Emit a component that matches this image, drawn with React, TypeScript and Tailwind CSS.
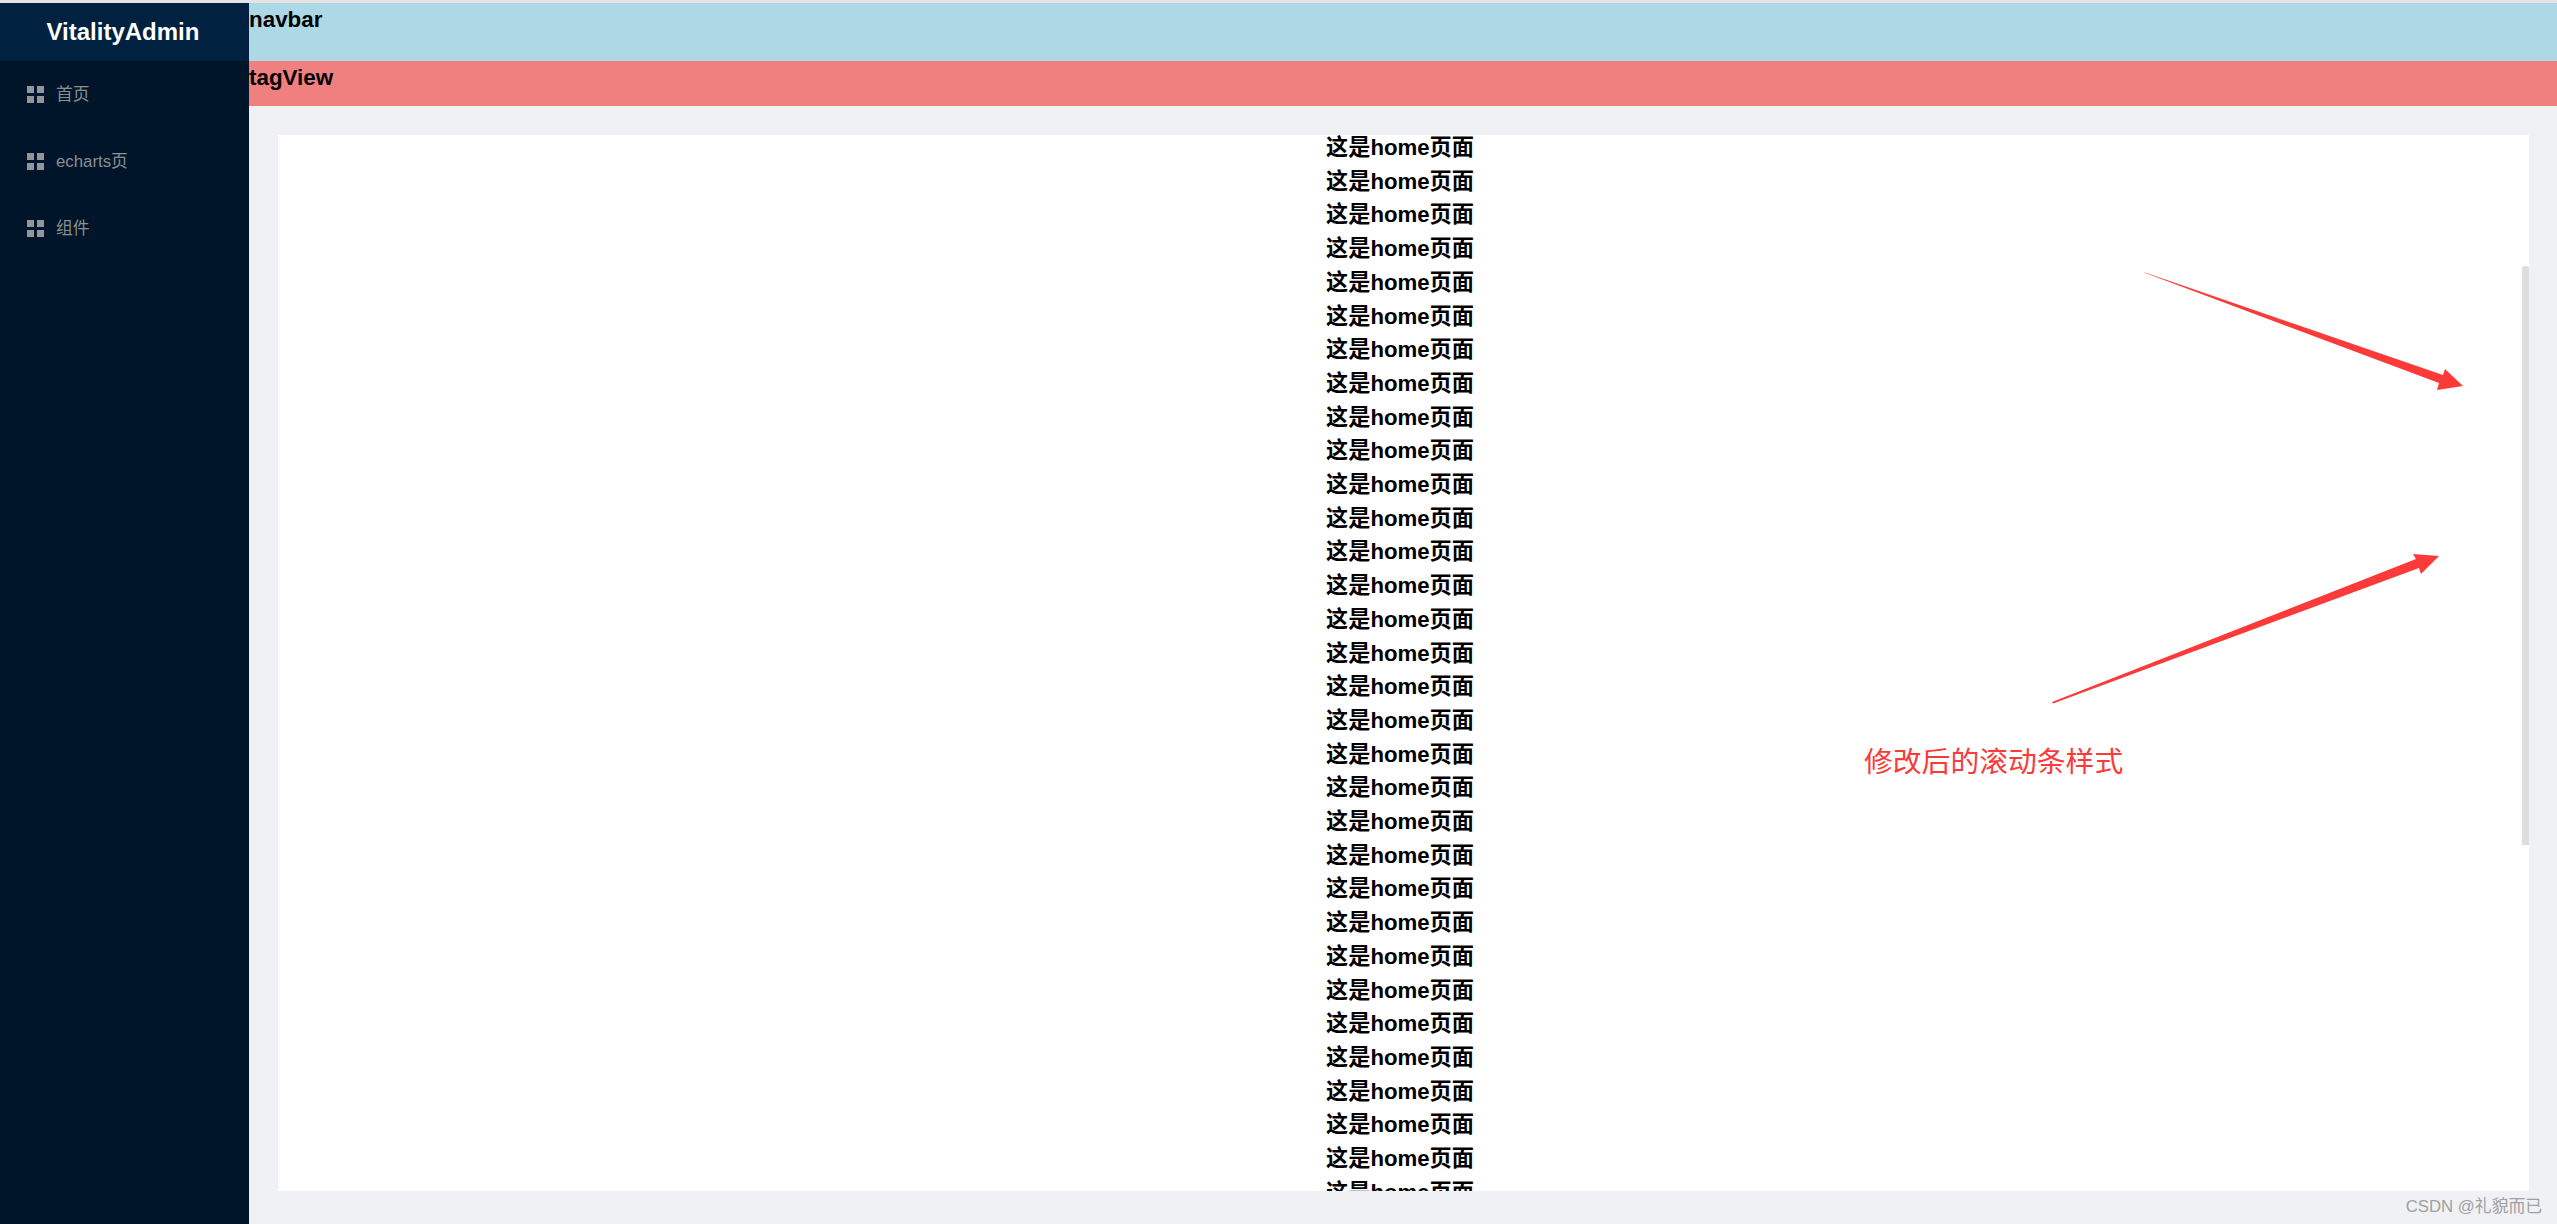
const rows = Array.from({ length: 33 }, (_, i) => i);

const menu = ["首页", "echarts页", "组件"];

function MenuIcon() {
  return (
    <svg width="17" height="17" viewBox="0 0 17 17" className="shrink-0">
      <rect x="0" y="0" width="7" height="7" fill="#94969a" />
      <rect x="10" y="0" width="7" height="7" fill="#94969a" />
      <rect x="0" y="10" width="7" height="7" fill="#94969a" />
      <rect x="10" y="10" width="7" height="7" fill="#94969a" />
    </svg>
  );
}

function Arrows() {
  return (
    <svg
      className="absolute left-0 top-0 pointer-events-none"
      width="2557"
      height="1224"
      viewBox="0 0 2557 1224"
    >
      <polygon
        points="2144,272.5 2145,272.5 2443,375 2445,369 2463,386 2437,390 2439,383"
        fill="#fc3a3a"
      />
      <polygon
        points="2052,702 2053,703.5 2419,568 2421,574 2439,556 2413,554 2416,559"
        fill="#fc3a3a"
      />
    </svg>
  );
}

export default function App() {
  return (
    <div className="relative h-screen w-full overflow-hidden bg-[#f0f1f5] font-['Liberation_Sans','Noto_Sans_CJK_SC',sans-serif]">
      <div className="h-[3px] bg-[#e4e4e4]"></div>
      <div className="flex h-[1221px]">
        <aside className="w-[249px] shrink-0 bg-[#001529]">
          <div className="h-[58px] pr-[3px] bg-[#002140] flex items-center justify-center text-white font-bold text-[24px]">
            VitalityAdmin
          </div>
          <ul>
            {menu.map((m) => (
              <li
                key={m}
                className="flex items-center h-[67px] pl-[27px] gap-[12px] text-[16.8px] text-[#8b8e92]"
              >
                <MenuIcon />
                {m}
              </li>
            ))}
          </ul>
        </aside>

        <div className="flex-1 flex flex-col min-w-0">
          <div className="h-[58px] bg-[#add8e6] text-[22.4px] font-bold text-black leading-[34px]">
            navbar
          </div>
          <div className="h-[45px] bg-[#f08080] text-[22.4px] font-bold text-black leading-[34px]">
            tagView
          </div>
          <main className="flex-1 pt-[29px] pb-[33px] pl-[29px] pr-[28px] min-h-0">
            <div className="relative h-full bg-white overflow-hidden pr-[7px]">
              <div className="-mt-[4px] text-center text-[22.2px] font-bold text-black leading-[33.7px]">
                {rows.map((r) => (
                  <div key={r}>这是home页面</div>
                ))}
              </div>
              <div className="absolute right-0 top-[131px] w-[7px] h-[579px] rounded-t-[3px] bg-[#dddee0]"></div>
            </div>
          </main>
        </div>
      </div>

      <Arrows />
      <div className="absolute left-[1864px] top-[742px] text-[28.8px] leading-[40px] text-[#fc3a3a] whitespace-nowrap">
        修改后的滚动条样式
      </div>
      <div className="absolute right-[15px] top-[1197px] text-[16.8px] leading-[20px] text-[#a0a0a0] whitespace-nowrap">
        CSDN @礼貌而已
      </div>
    </div>
  );
}
